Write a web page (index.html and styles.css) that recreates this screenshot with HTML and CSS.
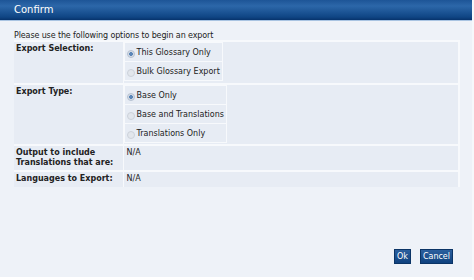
FILE: index.html
```html
<!DOCTYPE html>
<html lang="en">
<head>
    <meta charset="UTF-8">
    <title>Confirm</title>
    <link rel="stylesheet" href="styles.css">
</head>
<body>
    <div class="dialog">
        <div class="titlebar">Confirm</div>

        <div class="content">
            <p class="intro">Please use the following options to begin an export</p>

            <table class="form">
                <tr class="row-selection">
                    <th>Export Selection:</th>
                    <td>
                        <table class="options">
                            <tr><td><span class="radio checked"></span>This Glossary Only</td></tr>
                            <tr><td><span class="radio"></span>Bulk Glossary Export</td></tr>
                        </table>
                    </td>
                </tr>
                <tr class="row-type">
                    <th>Export Type:</th>
                    <td>
                        <table class="options">
                            <tr><td><span class="radio checked"></span>Base Only</td></tr>
                            <tr><td><span class="radio"></span>Base and Translations</td></tr>
                            <tr><td><span class="radio"></span>Translations Only</td></tr>
                        </table>
                    </td>
                </tr>
                <tr class="row-output">
                    <th>Output to include<br>Translations that are:</th>
                    <td class="value">N/A</td>
                </tr>
                <tr class="row-lang">
                    <th>Languages to Export:</th>
                    <td class="value">N/A</td>
                </tr>
            </table>
        </div>

        <div class="buttons">
            <button class="btn">Ok</button>
            <button class="btn">Cancel</button>
        </div>
    </div>
</body>
</html>
```

FILE: styles.css
```css
* {
    margin: 0;
    padding: 0;
    box-sizing: border-box;
}

body {
    background: #eef2f8;
    font-family: 'DejaVu Sans', Verdana, sans-serif;
    font-size: 8px;
    color: #222;
}

.dialog {
    width: 474px;
    height: 280px;
    display: flex;
    flex-direction: column;
    border-right: 2px solid #f6f8fb;
    border-bottom: 3px solid #fff;
}

.titlebar {
    height: 21px;
    padding: 4px 0 0 14px;
    background: linear-gradient(#1d5597, #2c67a9 30%, #0f4584 85%, #07336c);
    border-bottom: 1px solid #a9c4e2;
    color: #fff;
    font-family: 'DejaVu Sans', Verdana, sans-serif;
    font-size: 10px;
}

.content {
    flex: 1;
    padding: 10px 13px 0 14px;
}

.intro {
    letter-spacing: -0.12px;
}

.form {
    width: 446px;
    border-collapse: collapse;
    background: #e7ecf4;
    border-right: 2px solid #f7f9fc;
}

.form > tbody > tr > th,
.form > tbody > tr > td {
    border-top: 2px solid #f7f9fc;
    vertical-align: top;
}

.form > tbody > tr > th {
    width: 109px;
    padding: 2px 0 0 2px;
    text-align: left;
    font-weight: bold;
    border-right: 1px solid #f7f9fc;
}

.row-selection th { height: 43px; }
.row-type th { height: 61px; }
.row-output th { height: 26px; padding-top: 2px; line-height: 10px; }
.row-lang th { height: 16px; padding-top: 2px; }

.form .value {
    padding: 2px 0 0 3px;
}

.options {
    border-collapse: collapse;
}

.options td {
    height: 19px;
    padding: 2px 2px 1px 1px;
    border: 1px solid #f7f9fc;
    white-space: nowrap;
    vertical-align: middle;
}

.radio {
    display: inline-block;
    width: 8px;
    height: 8px;
    margin: 0 2px -3px 1px;
    border-radius: 50%;
    background: #e2e6ec;
    border: 1px solid #ccd2da;
}

.radio.checked {
    background: radial-gradient(circle, #5b86b8 0 1.6px, #d7dde6 2.2px);
    border-color: #b6c2d2;
}

.buttons {
    display: flex;
    justify-content: flex-end;
    gap: 9px;
    padding: 0 19px 13px 0;
}

.btn {
    height: 15px;
    padding: 0 2px;
    background: linear-gradient(#2b5f9e, #10427f);
    border: 1px solid #0b3466;
    color: #fff;
    font-family: 'DejaVu Sans', Verdana, sans-serif;
    font-size: 8px;
}
```
